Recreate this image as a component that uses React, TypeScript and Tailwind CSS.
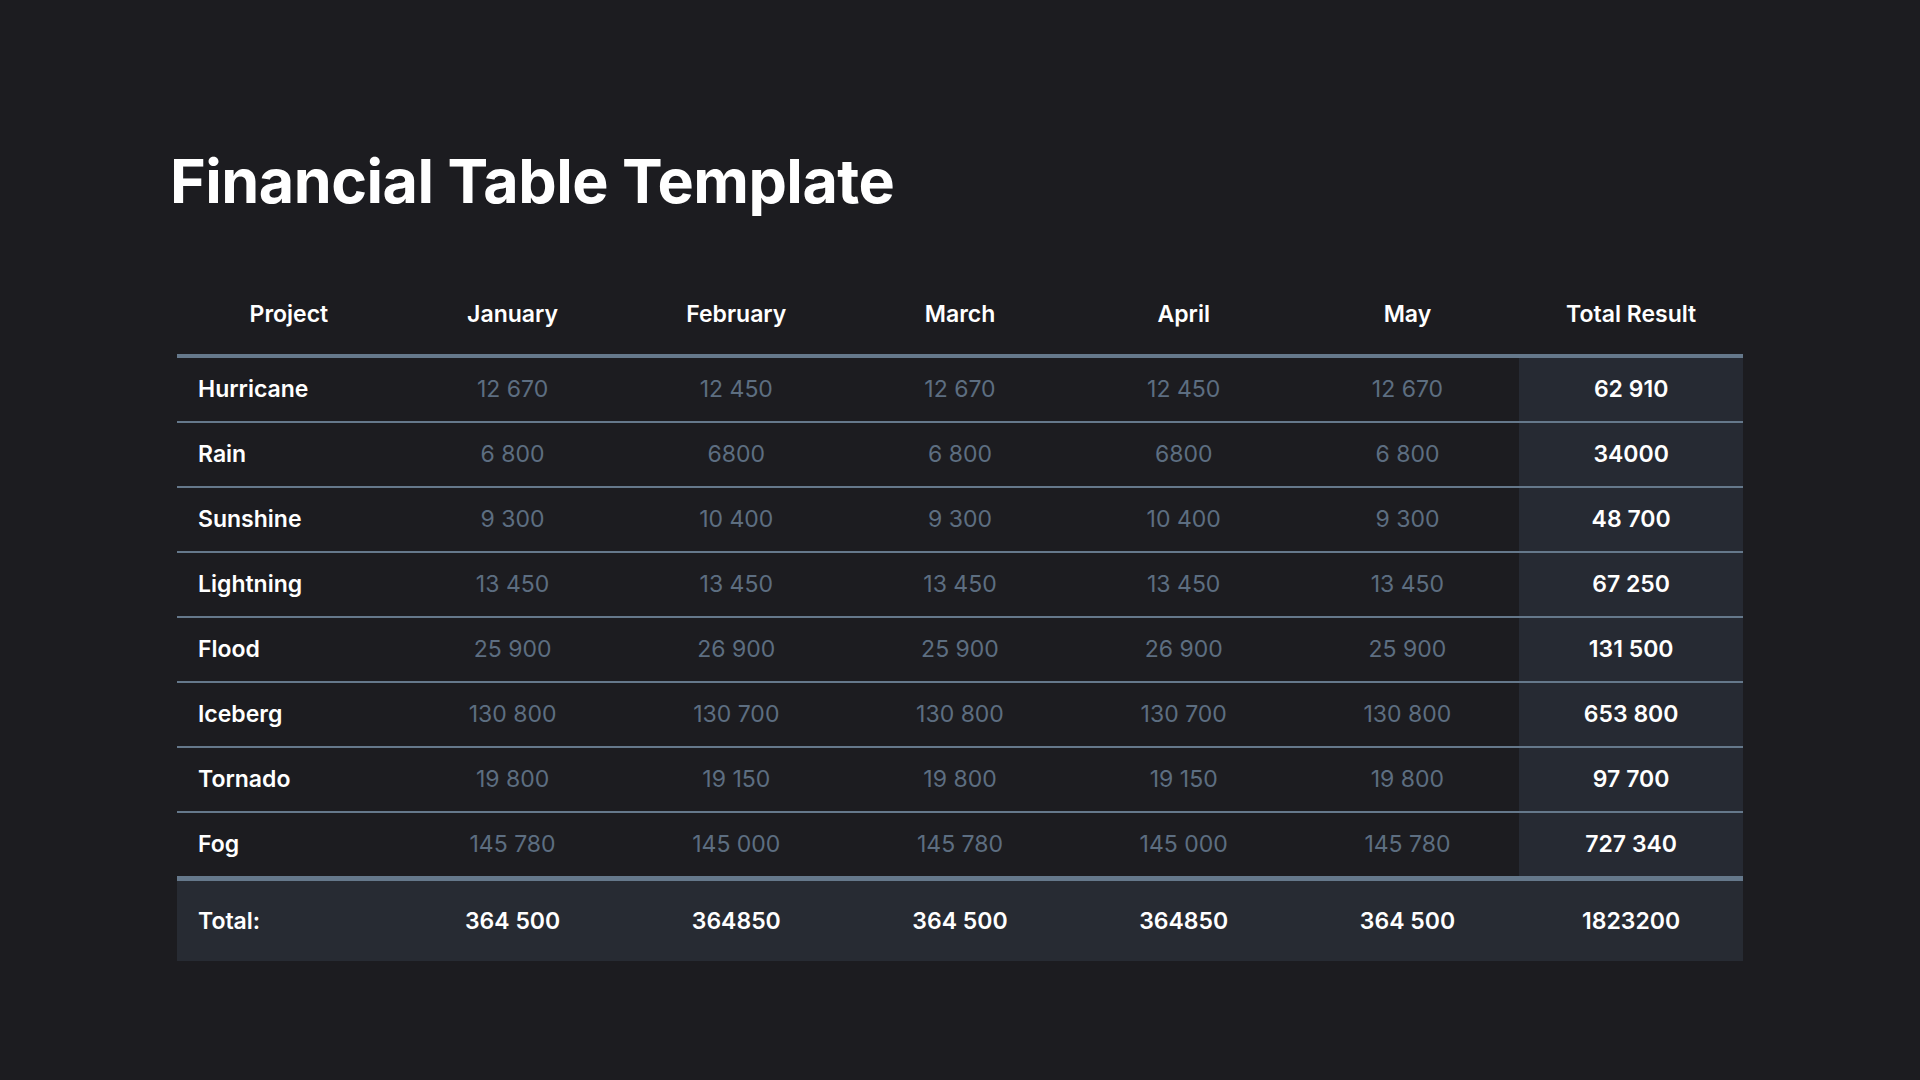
import React from "react";

const months = ["January", "February", "March", "April", "May"];

const rows: { name: string; values: string[]; total: string }[] = [
  { name: "Hurricane", values: ["12 670", "12 450", "12 670", "12 450", "12 670"], total: "62 910" },
  { name: "Rain", values: ["6 800", "6800", "6 800", "6800", "6 800"], total: "34000" },
  { name: "Sunshine", values: ["9 300", "10 400", "9 300", "10 400", "9 300"], total: "48 700" },
  { name: "Lightning", values: ["13 450", "13 450", "13 450", "13 450", "13 450"], total: "67 250" },
  { name: "Flood", values: ["25 900", "26 900", "25 900", "26 900", "25 900"], total: "131 500" },
  { name: "Iceberg", values: ["130 800", "130 700", "130 800", "130 700", "130 800"], total: "653 800" },
  { name: "Tornado", values: ["19 800", "19 150", "19 800", "19 150", "19 800"], total: "97 700" },
  { name: "Fog", values: ["145 780", "145 000", "145 780", "145 000", "145 780"], total: "727 340" },
];

const totals = ["364 500", "364850", "364 500", "364850", "364 500", "1823200"];

export default function App() {
  return (
    <div
      className="min-h-screen w-full bg-[#1c1c20] text-white"
      style={{ fontFamily: "Inter, 'Noto Sans', sans-serif" }}
    >
      <div className="pl-[170px] pt-[148px]">
        <h1 className="text-[61px] font-bold leading-[66px] tracking-[-0.5px] text-white">
          Financial Table Template
        </h1>
      </div>
      <div className="ml-[177px] mt-[60px] w-[1566px]">
        <div className="grid h-[84px] grid-cols-7 items-center border-b-4 border-[#65788b] text-center text-[23px] font-semibold text-white">
          <div>Project</div>
          {months.map((m) => (
            <div key={m}>{m}</div>
          ))}
          <div>Total Result</div>
        </div>
        {rows.map((r, i) => (
          <div
            key={r.name}
            className={
              i < rows.length - 1
                ? "grid h-[65px] grid-cols-7 border-b-2 border-[#65788b] text-[23px]"
                : "grid h-[63px] grid-cols-7 text-[23px]"
            }
          >
            <div className="flex items-center pl-[21px] font-semibold text-white">{r.name}</div>
            {r.values.map((v, j) => (
              <div key={j} className="flex items-center justify-center font-normal text-[#5d6e81]">
                {v}
              </div>
            ))}
            <div className="flex items-center justify-center bg-[#262a33] font-semibold text-white">
              {r.total}
            </div>
          </div>
        ))}
        <div className="grid h-[85px] grid-cols-7 border-t-[5px] border-[#65788b] bg-[#272b33] text-[23px] font-semibold text-white">
          <div className="flex items-center pl-[21px]">Total:</div>
          {totals.map((t, j) => (
            <div key={j} className="flex items-center justify-center">
              {t}
            </div>
          ))}
        </div>
      </div>
    </div>
  );
}
